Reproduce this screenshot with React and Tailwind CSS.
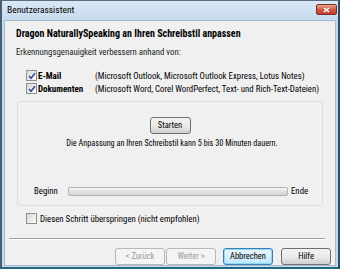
import React from "react";

function Check({ checked }) {
  return (
    <div className="w-[11px] h-[11px] border border-[#8e8f8f] bg-gradient-to-br from-[#d8d8d8] to-[#fbfbfb] flex items-center justify-center shrink-0">
      {checked && (
        <svg width="8" height="8" viewBox="0 0 8 8">
          <path d="M1 4 L3 6.3 L7 1.2" stroke="#2f4b9a" strokeWidth="1.5" fill="none" />
        </svg>
      )}
    </div>
  );
}

function Btn({ children, className = "w-[50px]", disabled, focus }) {
  return (
    <div
      className={`h-[17px] rounded-[3px] border flex items-center justify-center text-[8.5px] leading-none ${className} ${
        disabled
          ? "border-[#b5b8ba] bg-[#f4f4f4] text-[#9a9a9a]"
          : focus
          ? "border-[#3c7fb1] bg-gradient-to-b from-[#eaf6fd] via-[#d9f0fc] to-[#bee6fd] text-black shadow-[inset_0_0_0_1px_#8fd6f7]"
          : "border-[#707070] bg-gradient-to-b from-[#f2f2f2] via-[#ebebeb] to-[#cfcfcf] text-black"
      }`}
    >
      {children}
    </div>
  );
}

export default function App() {
  return (
    <div className="w-[340px] h-[269px] overflow-hidden bg-[#c6daee] font-['Roboto_Condensed','Liberation_Sans',sans-serif]">
      <div className="w-full h-full border-l-2 border-r-2 border-t border-b-2 border-l-[#4b5d70] border-r-[#2d4a66] border-t-[#5a6c80] border-b-[#1f6a80] flex flex-col">
        <div className="h-[19px] shrink-0 flex items-start justify-between pl-[5px] pr-[1px] bg-gradient-to-b from-[#dbe8f5] to-[#c6daee]">
          <span className="text-[9.5px] leading-none text-black mt-[4px]">Benutzerassistent</span>
          <div className="w-[21px] h-[11px] mt-[3px] rounded-[2px] border border-[#7a3226] bg-gradient-to-b from-[#e7a390] via-[#cf5a42] to-[#c0392b] flex items-center justify-center">
            <svg width="7" height="6" viewBox="0 0 7 6">
              <path d="M1 1 L6 5 M6 1 L1 5" stroke="white" strokeWidth="1.6" />
            </svg>
          </div>
        </div>
        <div className="h-[246px] mx-[2px] bg-[#f0f0f0] border border-[#a9bdd1] flex flex-col text-[8.8px] leading-[12px] text-black">
          <div className="pl-[11px] mt-[7px] text-[10px] font-bold whitespace-nowrap">Dragon NaturallySpeaking an Ihren Schreibstil anpassen</div>
          <div className="pl-[11px] mt-[6px] text-[#222] whitespace-nowrap">Erkennungsgenauigkeit verbessern anhand von:</div>
          <div className="pl-[21px] mt-[11px] flex flex-col">
            <div className="flex items-center h-[13px] whitespace-nowrap">
              <Check checked />
              <span className="ml-[1px] w-[57px] shrink-0 font-bold text-[9px]">E-Mail</span>
              <span>(Microsoft Outlook, Microsoft Outlook Express, Lotus Notes)</span>
            </div>
            <div className="flex items-center h-[13px] whitespace-nowrap">
              <Check checked />
              <span className="ml-[1px] w-[57px] shrink-0 font-bold text-[9px]">Dokumenten</span>
              <span>(Microsoft Word, Corel WordPerfect, Text- und Rich-Text-Dateien)</span>
            </div>
          </div>
          <div className="ml-[12px] w-[306px] mt-[6px] h-[105px] shrink-0 border border-[#dcdcdc] rounded-[3px] flex flex-col items-center">
            <div className="mt-[15px]"><Btn className="w-[41px]">Starten</Btn></div>
            <div className="mt-[3px] ml-[4px] text-[8.2px] whitespace-nowrap">Die Anpassung an Ihren Schreibstil kann 5 bis 30 Minuten dauern.</div>
            <div className="mt-[36px] w-full flex items-center pl-[16px]">
              <span className="w-[34px]">Beginn</span>
              <div className="w-[220px] h-[9px] border border-[#b2b2b2] rounded-[2px] bg-gradient-to-b from-[#f6f6f6] via-[#e2e2e2] to-[#d3d3d3]" />
              <span className="ml-[3px]">Ende</span>
            </div>
          </div>
          <div className="pl-[21px] mt-[6px] flex items-center h-[13px] whitespace-nowrap">
            <Check />
            <span className="ml-[3px]">Diesen Schritt überspringen (nicht empfohlen)</span>
          </div>
          <div className="ml-[4px] w-[316px] mt-[13px] h-[2px] shrink-0 border-t border-[#a0a0a0] border-b border-b-white" />
          <div className="mt-[8px] flex pl-[110px]">
            <Btn disabled>&lt; Zurück</Btn>
            <div className="ml-[1px]"><Btn disabled>Weiter &gt;</Btn></div>
            <div className="ml-[7px]"><Btn focus>Abbrechen</Btn></div>
            <div className="ml-[8px]"><Btn>Hilfe</Btn></div>
          </div>
        </div>
      </div>
    </div>
  );
}
